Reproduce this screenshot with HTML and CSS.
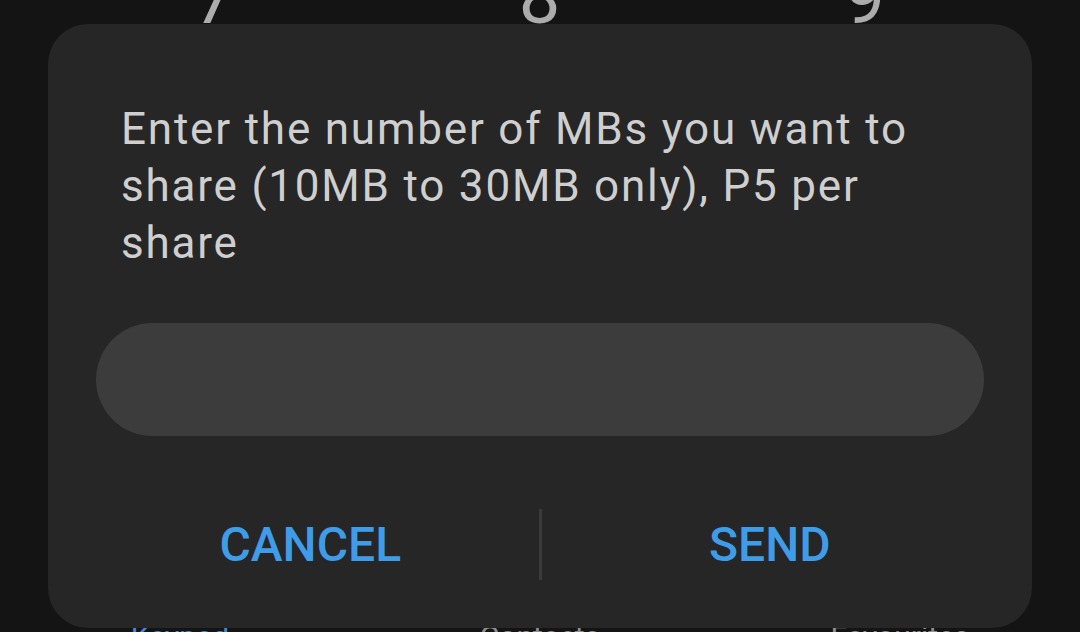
FILE: index.html
```html
<!DOCTYPE html>
<html>
<head>
<meta charset="utf-8">
<link rel="stylesheet" href="styles.css">
</head>
<body>
<div class="screen">
  <div class="backdrop">
    <div class="keys">
      <div class="key">7</div>
      <div class="key">8</div>
      <div class="key">9</div>
    </div>
    <div class="tabs">
      <div class="tab active">Keypad</div>
      <div class="tab">Contacts</div>
      <div class="tab">Favourites</div>
    </div>
  </div>
  <div class="dialog">
    <p class="message">Enter the number of MBs you want to share (10MB to 30MB only), P5 per share</p>
    <div class="field"></div>
    <div class="actions">
      <button class="btn">CANCEL</button>
      <span class="divider"></span>
      <button class="btn">SEND</button>
    </div>
  </div>
</div>
</body>
</html>
```
FILE: styles.css
```css
html, body {
  margin: 0;
  padding: 0;
  background: #141414;
}
.screen {
  position: relative;
  width: 1080px;
  height: 632px;
  overflow: hidden;
  font-family: Roboto, "Liberation Sans", sans-serif;
}
.backdrop {
  display: flex;
  flex-direction: column;
  justify-content: space-between;
  height: 632px;
}
.keys {
  display: grid;
  grid-template-columns: repeat(3, 325px);
  padding-left: 52px;
  margin-top: -42px;
}
.key {
  text-align: center;
  font-size: 74px;
  font-weight: 400;
  line-height: 80px;
  color: #acacac;
}
.tabs {
  display: grid;
  grid-template-columns: repeat(3, 360px);
  margin-bottom: -25px;
}
.tab {
  text-align: center;
  font-size: 30px;
  line-height: 40px;
  color: #8f8f8f;
}
.tab.active {
  color: #3d8fd6;
}
.dialog {
  position: absolute;
  left: 48px;
  top: 24px;
  width: 984px;
  height: 604px;
  box-sizing: border-box;
  padding: 77px 48px 0;
  background: #262626;
  border-radius: 40px;
  display: flex;
  flex-direction: column;
}
.message {
  margin: 0;
  padding: 0 25px;
  font-size: 44px;
  letter-spacing: 1.8px;
  line-height: 57px;
  color: #cfcfcf;
}
.field {
  margin-top: 51px;
  height: 113px;
  border-radius: 57px;
  background: #3c3c3c;
}
.actions {
  margin: 73px -14px 0;
  height: 71px;
  display: flex;
  align-items: center;
}
.btn {
  flex: 1;
  background: none;
  border: 0;
  padding: 0;
  font-family: Roboto, "Liberation Sans", sans-serif;
  font-weight: 500;
  font-size: 48px;
  line-height: 71px;
  color: #3f9ce8;
}
.divider {
  width: 3px;
  height: 71px;
  background: #3a3a3a;
}
```
